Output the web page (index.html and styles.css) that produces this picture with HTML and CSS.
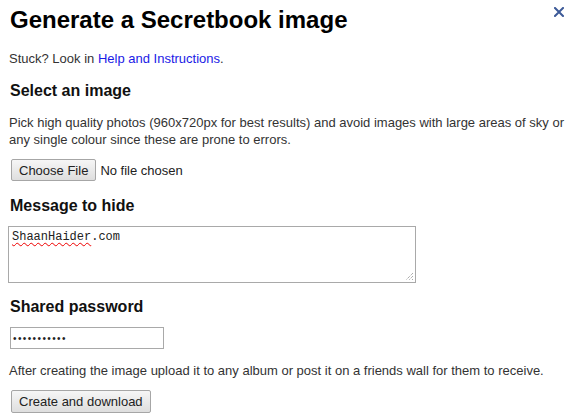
FILE: index.html
```html
<!DOCTYPE html>
<html>
<head>
<meta charset="utf-8">
<link rel="stylesheet" href="styles.css">
</head>
<body>
<div class="dialog">
  <a class="close" href="#" aria-label="Close">
    <svg width="10" height="10" viewBox="0 0 10 10"><path d="M1 1 L9 9 M9 1 L1 9" stroke="#3d5a98" stroke-width="2" stroke-linecap="square"/></svg>
  </a>
  <h1 class="title">Generate a Secretbook image</h1>
  <p class="help">Stuck? Look in <a href="#" class="link">Help and Instructions</a>.</p>

  <h2 class="section">Select an image</h2>
  <p class="desc">Pick high quality photos (960x720px for best results) and avoid images with large areas of sky or any single colour since these are prone to errors.</p>
  <div class="file-row">
    <button class="btn" type="button">Choose File</button>
    <span class="file-status">No file chosen</span>
  </div>

  <h2 class="section section-msg">Message to hide</h2>
  <div class="textarea"><span class="misspelled">ShaanHaider</span>.com<svg class="grip" width="9" height="9" viewBox="0 0 9 9"><path d="M8 1 L1 8 M8 4 L4 8 M8 7 L7 8" stroke="#888" stroke-width="1" stroke-dasharray="1 1"/></svg></div>

  <h2 class="section section-pw">Shared password</h2>
  <div class="password"><span class="dots">•••••••••••</span></div>

  <p class="after">After creating the image upload it to any album or post it on a friends wall for them to receive.</p>
  <button class="btn btn-create" type="button">Create and download</button>
</div>
</body>
</html>
```
FILE: styles.css
```css
html, body {
  margin: 0;
  padding: 0;
  background: #fff;
}
body {
  font-family: "Liberation Sans", Arial, sans-serif;
  font-size: 13px;
  color: #333;
}
.dialog {
  position: relative;
  padding: 6px 0 0 9px;
}
.close {
  position: absolute;
  top: 7px;
  left: 554px;
  display: block;
  width: 10px;
  height: 10px;
  line-height: 0;
}
.title {
  margin: 0 0 0 1px;
  font-size: 24px;
  line-height: 28px;
  font-weight: bold;
  color: #000;
}
.help {
  margin: 17px 0 0 0;
  line-height: 16px;
}
.link {
  color: #1a1ae6;
  text-decoration: none;
}
.section {
  margin: 14px 0 0 1px;
  font-size: 16px;
  line-height: 20px;
  font-weight: bold;
  color: #111;
}
.desc {
  margin: 13px 0 0 0;
  line-height: 17px;
}
.file-row {
  margin-top: 11px;
  display: flex;
  align-items: center;
  gap: 4px;
  padding-left: 2px;
}
.btn {
  font-family: "Liberation Sans", Arial, sans-serif;
  font-size: 13px;
  color: #222;
  height: 22px;
  padding: 0 7px;
  border: 1px solid #a6a6a6;
  border-radius: 2px;
  background: linear-gradient(#f6f6f6, #dedede);
  margin: 0;
}
.file-status {
  color: #222;
}
.section-msg {
  margin-top: 15px;
}
.textarea {
  position: relative;
  margin: 10px 0 0 -1px;
  width: 401px;
  height: 51px;
  border: 1px solid #a9a9a9;
  padding: 3px 2px 1px 3px;
  font-family: "Liberation Mono", "Courier New", monospace;
  font-size: 12px;
  line-height: 14px;
  color: #222;
}
.misspelled {
  text-decoration: underline wavy #e00;
  text-decoration-thickness: 1px;
  text-underline-offset: 2px;
}
.grip {
  position: absolute;
  right: 1px;
  bottom: 1px;
}
.section-pw {
  margin-top: 14px;
}
.password {
  margin: 10px 0 0 1px;
  width: 154px;
  height: 22px;
  border: 1px solid #a9a9a9;
  display: flex;
  align-items: center;
  padding-left: 2px;
  box-sizing: border-box;
}
.dots {
  font-size: 10px;
  letter-spacing: 1.4px;
  color: #222;
}
.after {
  margin: 13px 0 0 0;
  line-height: 17px;
}
.btn-create {
  display: block;
  margin: 11px 0 0 2px;
  height: 23px;
}
```
